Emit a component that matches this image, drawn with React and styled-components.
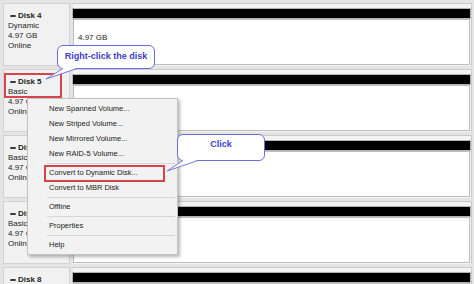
import styled, { createGlobalStyle } from "styled-components";

const GlobalStyle = createGlobalStyle`
  html, body {
    margin: 0;
    padding: 0;
    overflow: hidden;
    background: #e4e4e4;
  }
  * {
    box-sizing: border-box;
  }
`;

const Page = styled.div`
  position: relative;
  width: 474px;
  height: 284px;
  overflow: hidden;
  padding: 3px 2px 0 3px;
  display: flex;
  flex-direction: column;
  gap: 3px;
  font-family: "Liberation Sans", Arial, sans-serif;
  color: #1e1e1e;
`;

const Row = styled.div`
  display: grid;
  grid-template-columns: 67px 1fr;
  gap: 3px;
  height: 63px;
  flex-shrink: 0;
`;

const DiskLabel = styled.div`
  background: #f1f1f1;
  border: 1px solid #d2d2d2;
  padding: 7px 0 0 4px;
  font-size: 8px;
  line-height: 10px;
  white-space: nowrap;
  overflow: hidden;
`;

const Head = styled.div`
  position: relative;

  &::after {
    content: "";
    display: ${(p) => (p.$marked ? "block" : "none")};
    position: absolute;
    left: -4px;
    right: 7px;
    top: -4px;
    bottom: -1px;
    border: 2px solid #d8444c;
  }
`;

const Title = styled.div`
  display: flex;
  align-items: center;
  gap: 2px;
  padding-left: 2px;
  font-weight: bold;
`;

const DiskIcon = styled.span`
  width: 6px;
  height: 2px;
  background: #3c3c3c;
  border-radius: 1px;
`;

const VolumeCell = styled.div`
  display: flex;
  flex-direction: column;
  background: #f3f3f3;
  border-top: 1px solid #cbcbcb;
  border-right: 1px solid #cbcbcb;
  padding: 5px 1px 1px 0;
`;

const Bar = styled.div`
  height: 9px;
  background: #000;
  box-shadow: 0 0 0 1px #b4b4b4;
  flex-shrink: 0;
`;

const VolumeBox = styled.div`
  flex: 1;
  margin-top: 1px;
  background: #fff;
  border: 1px solid #bdbdbd;
  padding: 13px 0 0 4px;
  font-size: 8px;
  line-height: 10px;
`;

const Menu = styled.div`
  position: absolute;
  left: 27px;
  top: 98px;
  width: 151px;
  padding: 2px;
  background: #f2f2f2;
  border: 1px solid #c2c2c2;
  box-shadow: 2px 2px 3px rgba(0, 0, 0, 0.28);
  font-size: 7.5px;
  color: #222;
`;

const MenuItem = styled.div`
  position: relative;
  height: 15px;
  display: flex;
  align-items: center;
  padding-left: 19px;

  &::after {
    content: "";
    display: ${(p) => (p.$marked ? "block" : "none")};
    position: absolute;
    left: 14px;
    right: 10px;
    top: 0;
    bottom: -2px;
    border: 2px solid #d8444c;
  }
`;

const Separator = styled.div`
  height: 4px;
  display: flex;
  align-items: center;
  padding-left: 17px;

  &::before {
    content: "";
    flex: 1;
    height: 1px;
    background: #d6d6d6;
  }
`;

const Callout = styled.div`
  position: absolute;
  left: ${(p) => p.$x}px;
  top: ${(p) => p.$y}px;
  width: ${(p) => p.$w}px;
  height: ${(p) => p.$h}px;
  display: flex;
  align-items: center;
  justify-content: center;
  background: #fff;
  border: 1px solid #6c6cdc;
  border-radius: 6px;
  font-size: 9px;
  font-weight: bold;
  color: #3d3dd0;
  padding-bottom: ${(p) => p.$pb || 0}px;
`;

const Tails = styled.svg`
  position: absolute;
  left: 0;
  top: 0;
  width: 474px;
  height: 284px;
  pointer-events: none;
`;

// only Disk 4's volume text shows; the others sit under the menu
const disks = [
  { name: "Disk 4", type: "Dynamic", volume: true },
  { name: "Disk 5", type: "Basic", marked: true },
  { name: "Disk 6", type: "Basic" },
  { name: "Disk 7", type: "Basic" },
  { name: "Disk 8", type: "Basic" },
];

const menu = [
  "New Spanned Volume...",
  "New Striped Volume...",
  "New Mirrored Volume...",
  "New RAID-5 Volume...",
  "-",
  "Convert to Dynamic Disk...",
  "Convert to MBR Disk",
  "-",
  "Offline",
  "-",
  "Properties",
  "-",
  "Help",
];

function Tail({ base1, base2, tip }) {
  return (
    <g>
      <polygon
        points={`${base1[0]},${base1[1]} ${base2[0]},${base2[1]} ${tip[0]},${tip[1]}`}
        fill="#fff"
      />
      <polyline
        points={`${base1[0]},${base1[1] + 0.5} ${tip[0]},${tip[1]} ${base2[0]},${base2[1] + 0.5}`}
        fill="none"
        stroke="#7a7ade"
        strokeWidth="1"
      />
    </g>
  );
}

export default function App() {
  return (
    <>
      <GlobalStyle />
      <Page>
        {disks.map((d, i) => (
          <Row key={d.name}>
            <DiskLabel>
              <Head $marked={d.marked}>
                <Title>
                  <DiskIcon />
                  {d.name}
                </Title>
                {i < 4 && <div>{d.type}</div>}
              </Head>
              {i < 4 && <div>4.97 GB</div>}
              {i < 4 && <div>Online</div>}
            </DiskLabel>
            <VolumeCell>
              <Bar />
              <VolumeBox>
                {d.volume && (
                  <>
                    <div>4.97 GB</div>
                    <div>Unallocated</div>
                  </>
                )}
              </VolumeBox>
            </VolumeCell>
          </Row>
        ))}

        <Menu>
          {menu.map((m, i) =>
            m === "-" ? (
              <Separator key={i} />
            ) : (
              <MenuItem key={i} $marked={m === "Convert to Dynamic Disk..."}>
                {m}
              </MenuItem>
            )
          )}
        </Menu>

        <Callout $x={57} $y={45} $w={98} $h={24} $pb={2}>
          Right-click the disk
        </Callout>
        <Callout $x={177} $y={134} $w={88} $h={27} $pb={8}>
          Click
        </Callout>

        <Tails viewBox="0 0 474 284">
          <Tail base1={[63, 68]} base2={[77, 68]} tip={[46, 79]} />
          <Tail base1={[183, 160]} base2={[198, 160]} tip={[167, 171]} />
        </Tails>
      </Page>
    </>
  );
}
